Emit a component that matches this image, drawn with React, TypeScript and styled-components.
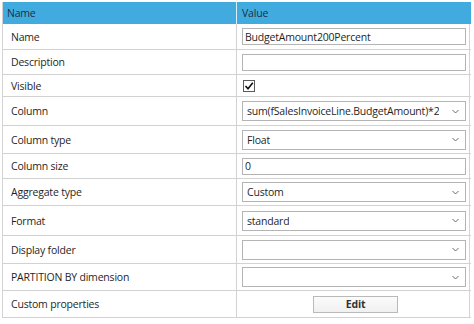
import React from "react";
import styled, { createGlobalStyle } from "styled-components";

const GlobalStyle = createGlobalStyle`
    body {
        margin: 0;
        background: #ffffff;
        font-family: "Open Sans", "Noto Sans", sans-serif;
        letter-spacing: -0.2px;
    }
`;

const Wrapper = styled.div`
    padding: 2px 4px 0 2px;
    width: 474px;
    height: 324px;
    box-sizing: border-box;
`;

const Grid = styled.div`
    display: grid;
    grid-template-columns: 233px 235px;
    border-left: 1px solid #d4d4d4;
    border-right: 1px solid #d4d4d4;
`;

const HeaderCell = styled.div<{ first?: boolean }>`
    height: 22px;
    background: #41abe0;
    color: #1c2f45;
    font-size: 10.5px;
    display: flex;
    align-items: center;
    padding-left: ${(p) => (p.first ? "4px" : "5px")};
    border-left: ${(p) => (p.first ? "none" : "1px solid #d9eef9")};
    box-sizing: border-box;
`;

const LabelCell = styled.div<{ h: number }>`
    height: ${(p) => p.h}px;
    display: flex;
    align-items: center;
    padding-left: 8px;
    font-size: 10.5px;
    color: #1f1f1f;
    border-bottom: 1px solid #d2d2d2;
    box-sizing: border-box;
`;

const ValueCell = styled.div<{ h: number; center?: boolean }>`
    height: ${(p) => p.h}px;
    display: flex;
    align-items: center;
    justify-content: ${(p) => (p.center ? "center" : "flex-start")};
    padding: 0 4px 0 5px;
    border-left: 1px solid #d2d2d2;
    border-bottom: 1px solid #d2d2d2;
    box-sizing: border-box;
`;

const TextBox = styled.div`
    width: 224px;
    height: 17px;
    border: 1px solid #b4b4b4;
    box-sizing: border-box;
    font-size: 10.5px;
    color: #1f1f1f;
    display: flex;
    align-items: center;
    padding-left: 2px;
    background: #fff;
`;

const Combo = styled.div`
    width: 224px;
    height: 20px;
    border: 1px solid #b4b4b4;
    box-sizing: border-box;
    font-size: 10.5px;
    color: #1f1f1f;
    display: flex;
    align-items: center;
    justify-content: space-between;
    padding: 0 6px 0 4px;
    background: #fff;
`;

const ComboText = styled.span`
    overflow: hidden;
    white-space: nowrap;
`;

const Chevron = styled.svg`
    width: 7px;
    height: 5px;
    flex-shrink: 0;
`;

const CheckBox = styled.div`
    width: 12px;
    height: 12px;
    border: 1px solid #5a5a5a;
    box-sizing: border-box;
    display: flex;
    align-items: center;
    justify-content: center;
    margin-left: 1px;
`;

const EditButton = styled.div`
    width: 85px;
    height: 17px;
    border: 1px solid #b9b9b9;
    background: linear-gradient(#fbfbfb, #f0f0f0);
    box-sizing: border-box;
    font-size: 10.5px;
    font-weight: 700;
    color: #333;
    display: flex;
    align-items: center;
    justify-content: center;
    margin-left: 2px;
`;

type Row =
    | { label: string; h: number; kind: "text"; value: string }
    | { label: string; h: number; kind: "combo"; value: string }
    | { label: string; h: number; kind: "check" }
    | { label: string; h: number; kind: "button" };

const rows: Row[] = [
    { label: "Name", h: 26, kind: "text", value: "BudgetAmount200Percent" },
    { label: "Description", h: 25, kind: "text", value: "" },
    { label: "Visible", h: 22, kind: "check" },
    { label: "Column", h: 29, kind: "combo", value: "sum(fSalesInvoiceLine.BudgetAmount)*2" },
    { label: "Column type", h: 28, kind: "combo", value: "Float" },
    { label: "Column size", h: 25, kind: "text", value: "0" },
    { label: "Aggregate type", h: 27, kind: "combo", value: "Custom" },
    { label: "Format", h: 30, kind: "combo", value: "standard" },
    { label: "Display folder", h: 28, kind: "combo", value: "" },
    { label: "PARTITION BY dimension", h: 27, kind: "combo", value: "" },
    { label: "Custom properties", h: 27, kind: "button" },
];

const Arrow = () => (
    <Chevron viewBox="0 0 7 5">
        <path d="M0.5 1 L3.5 4 L6.5 1" fill="none" stroke="#6b6b6b" strokeWidth="1" />
    </Chevron>
);

const renderValue = (row: Row) => {
    switch (row.kind) {
        case "text":
            return <TextBox>{row.value}</TextBox>;
        case "combo":
            return (
                <Combo>
                    <ComboText>{row.value}</ComboText>
                    <Arrow />
                </Combo>
            );
        case "check":
            return (
                <CheckBox>
                    <svg width="10" height="10" viewBox="0 0 10 10">
                        <path d="M1.5 5 L4 7.8 L8.8 1.8" fill="none" stroke="#111" strokeWidth="1.6" />
                    </svg>
                </CheckBox>
            );
        case "button":
            return <EditButton>Edit</EditButton>;
    }
};

const App = () => {
    return (
        <>
            <GlobalStyle />
            <Wrapper>
                <Grid>
                    <HeaderCell first>Name</HeaderCell>
                    <HeaderCell>Value</HeaderCell>
                    {rows.map((row) => (
                        <React.Fragment key={row.label}>
                            <LabelCell h={row.h}>{row.label}</LabelCell>
                            <ValueCell h={row.h} center={row.kind === "button"}>
                                {renderValue(row)}
                            </ValueCell>
                        </React.Fragment>
                    ))}
                </Grid>
            </Wrapper>
        </>
    );
};

export default App;
